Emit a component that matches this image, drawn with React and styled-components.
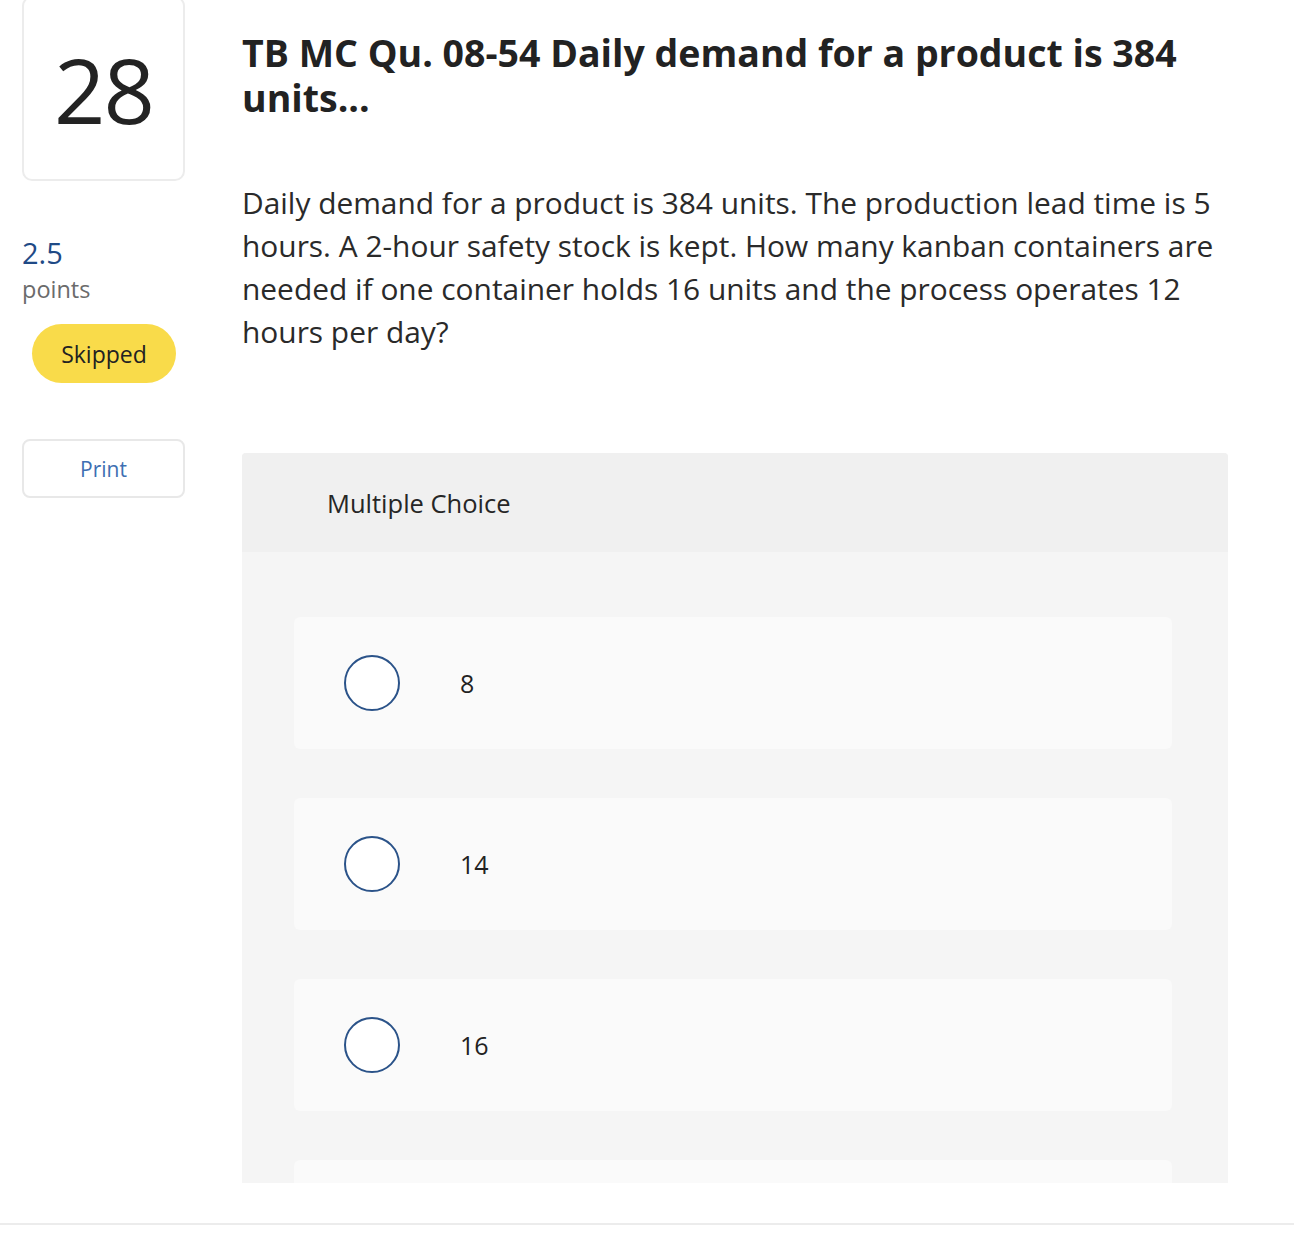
import React from "react";
import styled, { createGlobalStyle } from "styled-components";

const Global = createGlobalStyle`
  html, body { margin: 0; padding: 0; background: #fff; }
  body { font-family: "Open Sans", "Liberation Sans", sans-serif; color: #262626; }
`;

const Page = styled.div`
  width: 1294px;
  height: 1234px;
  overflow: hidden;
  display: flex;
  flex-direction: column;
`;

const Main = styled.div`
  display: flex;
  gap: 57px;
  padding-left: 22px;
  height: 1183px;
  overflow: hidden;
`;

const Side = styled.aside`
  width: 163px;
  flex: none;
  display: flex;
  flex-direction: column;
`;

const NumberBox = styled.div`
  margin-top: -4px;
  height: 185px;
  box-sizing: border-box;
  border: 2px solid #ececec;
  border-radius: 10px;
  display: flex;
  align-items: center;
  justify-content: center;
  font-size: 90px;
  font-weight: 400;
  color: #232323;
  letter-spacing: -2px;
`;

const Points = styled.div`
  margin-top: 54px;
  font-size: 29px;
  line-height: 36px;
  color: #1f4a86;
`;

const PointsLabel = styled.div`
  font-size: 23.5px;
  line-height: 36px;
  color: #6b6b6b;
`;

const Badge = styled.div`
  margin: 17px 0 0 10px;
  width: 144px;
  height: 59px;
  border-radius: 30px;
  background: #f9db4a;
  display: flex;
  align-items: center;
  justify-content: center;
  font-size: 23px;
  color: #222;
`;

const PrintButton = styled.button`
  margin-top: 56px;
  width: 163px;
  height: 59px;
  box-sizing: border-box;
  border: 2px solid #e8e8e8;
  border-radius: 8px;
  background: #fff;
  font-family: inherit;
  font-size: 21px;
  color: #3e6fb2;
`;

const Content = styled.section`
  width: 986px;
  flex: none;
`;

const Title = styled.h1`
  margin: 30px 0 0;
  font-size: 37.5px;
  line-height: 45px;
  font-weight: 700;
  color: #222;
`;

const Question = styled.p`
  margin: 61px 0 0;
  font-size: 29.9px;
  line-height: 43px;
  color: #2a2a2a;
`;

const Panel = styled.div`
  margin-top: 100px;
  background: #f5f5f5;
  border-radius: 4px 4px 0 0;
`;

const PanelHeader = styled.div`
  height: 99px;
  background: #f0f0f0;
  border-radius: 4px 4px 0 0;
  display: flex;
  align-items: center;
  padding-left: 85px;
  font-size: 25.5px;
  color: #262626;
`;

const Options = styled.div`
  display: flex;
  flex-direction: column;
  gap: 49px;
  padding: 65px 56px 60px 52px;
`;

const Option = styled.label`
  height: 132px;
  background: #fafafa;
  border-radius: 6px;
  display: flex;
  align-items: center;
  padding-left: 50px;
  gap: 60px;
  font-size: 25px;
  color: #222;
`;

const Radio = styled.span`
  width: 56px;
  height: 56px;
  box-sizing: border-box;
  border-radius: 50%;
  border: 2px solid #2b5389;
  background: #fff;
  flex: none;
`;

const Footer = styled.div`
  margin-top: 40px;
  height: 2px;
  background: #ececec;
`;

const choices = ["8", "14", "16", ""];

export default function App() {
  return (
    <Page>
      <Global />
      <Main>
        <Side>
          <NumberBox>28</NumberBox>
          <Points>2.5</Points>
          <PointsLabel>points</PointsLabel>
          <Badge>Skipped</Badge>
          <PrintButton>Print</PrintButton>
        </Side>
        <Content>
          <Title>TB MC Qu. 08-54 Daily demand for a product is 384 units...</Title>
          <Question>
            Daily demand for a product is 384 units. The production lead time is 5 hours. A 2-hour
            safety stock is kept. How many kanban containers are needed if one container holds 16
            units and the process operates 12 hours per day?
          </Question>
          <Panel>
            <PanelHeader>Multiple Choice</PanelHeader>
            <Options>
              {choices.map((c, i) => (
                <Option key={i}>
                  <Radio />
                  {c}
                </Option>
              ))}
            </Options>
          </Panel>
        </Content>
      </Main>
      <Footer />
    </Page>
  );
}
